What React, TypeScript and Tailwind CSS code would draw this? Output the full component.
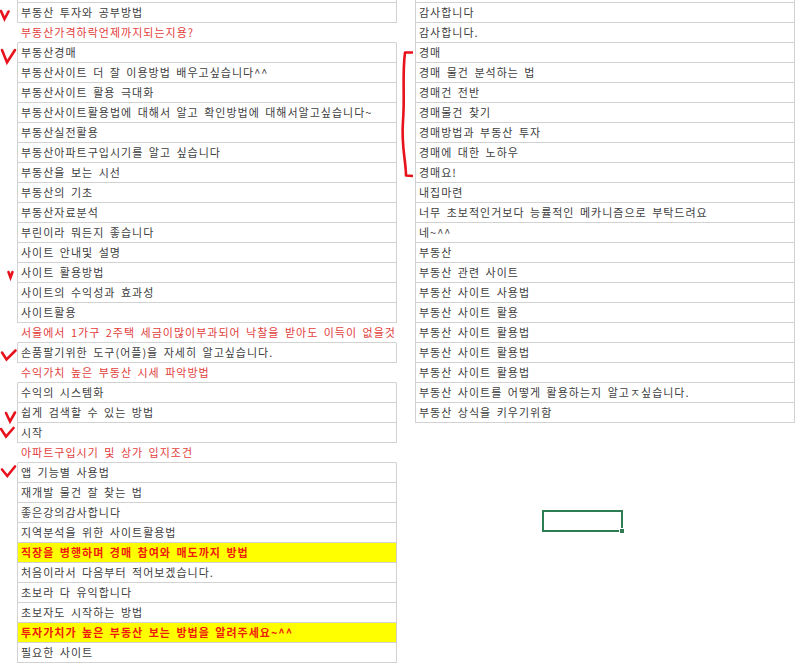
import React from 'react';

type Row = {
  text: string;
  kind?: 'red' | 'yellow';
  check?: [number, number, number, number, number, number];
};

const leftRows: Row[] = [
  { text: '부동산 투자와 공부방법', check: [1, 8, 4.5, 16, 8.5, 8.5] },
  { text: '부동산가격하락언제까지되는지용?', kind: 'red' },
  { text: '부동산경매', check: [2, 7, 7, 19.5, 15, 7] },
  { text: '부동산사이트 더 잘 이용방법 배우고싶습니다^^' },
  { text: '부동산사이트 활용 극대화' },
  { text: '부동산사이트활용법에 대해서 알고 확인방법에 대해서알고싶습니다~' },
  { text: '부동산실전활용' },
  { text: '부동산아파트구입시기를 알고 싶습니다' },
  { text: '부동산을 보는 시선' },
  { text: '부동산의 기초' },
  { text: '부동산자료분석' },
  { text: '부린이라 뭐든지 좋습니다' },
  { text: '사이트 안내및 설명' },
  { text: '사이트 활용방법', check: [8.5, 9, 10.5, 14.5, 12.5, 9] },
  { text: '사이트의 수익성과 효과성' },
  { text: '사이트활용' },
  { text: '서울에서 1가구 2주택 세금이많이부과되어 낙찰을 받아도 이득이 없을것', kind: 'red' },
  { text: '손품팔기위한 도구(어플)을 자세히 알고싶습니다.', check: [2, 9.5, 6.5, 16.5, 15.5, 7.5] },
  { text: '수익가치 높은 부동산 시세 파악방법', kind: 'red' },
  { text: '수익의 시스템화' },
  { text: '쉽게 검색할 수 있는 방법', check: [6, 10, 10, 18.5, 15, 9.5] },
  { text: '시작', check: [1, 6, 6, 13.5, 13.5, 5] },
  { text: '아파트구입시기 및 상가 입지조건', kind: 'red' },
  { text: '앱 기능별 사용법', check: [2, 6.5, 7.3, 13, 15, 3.5] },
  { text: '재개발 물건 잘 찾는 법' },
  { text: '좋은강의감사합니다' },
  { text: '지역분석을 위한 사이트활용법' },
  { text: '직장을 병행하며 경매 참여와 매도까지 방법', kind: 'yellow' },
  { text: '처음이라서 다음부터 적어보겠습니다.' },
  { text: '초보라 다 유익합니다' },
  { text: '초보자도 시작하는 방법' },
  { text: '투자가치가 높은 부동산 보는 방법을 알려주세요~^^', kind: 'yellow' },
  { text: '필요한 사이트' },
];

const rightRows: string[] = [
  '감사합니다',
  '감사합니다.',
  '경매',
  '경매 물건 분석하는 법',
  '경매건 전반',
  '경매물건 찾기',
  '경매방법과 부동산 투자',
  '경매에 대한 노하우',
  '경매요!',
  '내집마련',
  '너무 초보적인거보다 능률적인 메카니즘으로 부탁드려요',
  '네~^^',
  '부동산',
  '부동산 관련 사이트',
  '부동산 사이트 사용법',
  '부동산 사이트 활용',
  '부동산 사이트 활용법',
  '부동산 사이트 활용법',
  '부동산 사이트 활용법',
  '부동산 사이트를 어떻게 활용하는지 알고ㅈ싶습니다.',
  '부동산 상식을 키우기위함',
];

const font = "font-['Noto_Sans_CJK_KR','Noto_Sans',sans-serif] text-[11px] tracking-[1px] [word-spacing:2px]";

const Check = ({ p }: { p: Row['check'] }) => {
  if (!p) return null;
  return (
    <svg width="17" height="20" className="overflow-visible">
      <path
        d={`M${p[0]} ${p[1]} L${p[2]} ${p[3]} L${p[4]} ${p[5]}`}
        fill="none"
        stroke="#e8121c"
        strokeWidth="2.6"
        strokeLinecap="round"
        strokeLinejoin="miter"
      />
    </svg>
  );
};

const LeftRow = ({ row }: { row: Row }) => {
  const cell =
    row.kind === 'red'
      ? 'border-x-transparent text-[#e2403c]'
      : row.kind === 'yellow'
      ? 'bg-[#ffff00] border-x-[#d4d4c0] text-[#ee1c0c] font-bold'
      : 'border-x-[#d2d2d2] text-[#404040]';
  return (
    <div className="flex h-[20px]">
      <div className="w-[17px] shrink-0">
        <Check p={row.check} />
      </div>
      <div className={`w-[380px] shrink-0 border-x border-b border-b-[#d2d2d2] flex items-center pl-[3px] whitespace-nowrap ${cell}`}>
        {row.text}
      </div>
    </div>
  );
};

export default function App() {
  return (
    <div className={`relative w-[800px] h-[665px] overflow-hidden bg-white ${font}`}>
      <div className="flex gap-[18px]">
        <div className="flex flex-col">
          <div className="flex h-[3px]">
            <div className="w-[17px]" />
            <div className="w-[380px] border-x border-b border-[#d2d2d2]" />
          </div>
          {leftRows.map((r, i) => (
            <LeftRow key={i} row={r} />
          ))}
        </div>
        <div className="flex flex-col w-[380px]">
          <div className="h-[3px] border-x border-b border-[#d2d2d2]" />
          {rightRows.map((t, i) => (
            <div
              key={i}
              className="h-[20px] border-x border-b border-[#d2d2d2] flex items-center pl-[3px] whitespace-nowrap text-[#404040]"
            >
              {t}
            </div>
          ))}
        </div>
      </div>

      {/* red bracket drawn over the gap */}
      <svg className="absolute left-[396px] top-[46px]" width="22" height="136">
        <path
          d="M17 6.5 L9 6.5 C6 30 9 50 7 75 C5 100 10 115 10 129.5 L17 130"
          fill="none"
          stroke="#e8121c"
          strokeWidth="2.6"
          strokeLinejoin="round"
        />
      </svg>

      {/* selected cell */}
      <div className="absolute left-[542px] top-[510px] w-[81px] h-[22px] border-2 border-[#2e7d52]">
        <div className="absolute -right-[4px] -bottom-[4px] w-[6px] h-[6px] bg-[#2e7d52] border border-white" />
      </div>
    </div>
  );
}
